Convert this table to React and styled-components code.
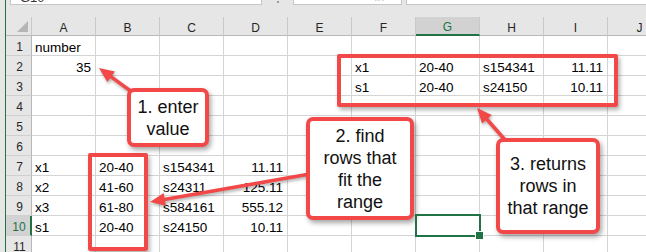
import styled, { createGlobalStyle } from "styled-components";

const GlobalStyle = createGlobalStyle`
  html, body {
    margin: 0;
    padding: 0;
    background: #e6e6e6;
    overflow: hidden;
  }
  * {
    box-sizing: border-box;
  }
`;

const RED = "#f24848";
const GREEN = "#217346";

const COLS = ["A", "B", "C", "D", "E", "F", "G", "H", "I", "J"];
const ROW_COUNT = 11;
const SELECTED = { col: "G", row: 10 };

// cell contents, keyed by address; numbers are right aligned
const cells = {
  A1: "number",
  A2: 35,
  F2: "x1",
  G2: "20-40",
  H2: "s154341",
  I2: "11.11",
  F3: "s1",
  G3: "20-40",
  H3: "s24150",
  I3: "10.11",
  A7: "x1",
  B7: "20-40",
  C7: "s154341",
  D7: "11.11",
  A8: "x2",
  B8: "41-60",
  C8: "s24311",
  D8: "125.11",
  A9: "x3",
  B9: "61-80",
  C9: "s584161",
  D9: "555.12",
  A10: "s1",
  B10: "20-40",
  C10: "s24150",
  D10: "10.11",
};

const numeric = new Set(["A2", "I2", "I3", "D7", "D8", "D9", "D10"]);

const Window = styled.div`
  position: relative;
  width: 646px;
  height: 252px;
  overflow: hidden;
  padding-left: 5px;
  font-family: "Liberation Sans", Arial, sans-serif;
`;

const Workbook = styled.div`
  height: 100%;
  border-left: 1px solid ${GREEN};
  display: flex;
  flex-direction: column;
`;

const FormulaBar = styled.div`
  display: flex;
  height: 7px;
  margin-bottom: 12px;
`;

const NameBox = styled.div`
  width: 252px;
  margin-left: 4px;
  background: #fff;
  border: 1px solid #c6c6c6;
  border-top: none;
  overflow: hidden;
  font-size: 13px;
  color: #333;
  padding-left: 9px;
  line-height: 13px;

  span {
    display: block;
    margin-top: -9px;
  }
`;

const Handle = styled.div`
  width: 31px;
  display: flex;
  justify-content: center;

  &::before {
    content: "";
    width: 2px;
    height: 2px;
    margin-top: 1px;
    background: #9a9a9a;
  }
`;

const FxBox = styled.div`
  width: 109px;
  background: #fff;
  border: 1px solid #c6c6c6;
  border-top: none;
  overflow: hidden;
  display: flex;
  gap: 22px;
  padding-left: 14px;
  font-size: 13px;
  color: #c8c8c8;
  line-height: 13px;

  span {
    margin-top: -10px;
  }
`;

const FormulaInput = styled.div`
  flex: 1;
  margin-left: 4px;
  background: #fff;
  border: 1px solid #c6c6c6;
  border-top: none;
  border-right: none;
`;

const Sheet = styled.div`
  display: grid;
  grid-template-columns: 26px repeat(${COLS.length}, 64px);
  grid-template-rows: 19px repeat(${ROW_COUNT}, 20px);
  background: #fff;
  font-size: 13.5px;
`;

const Corner = styled.div`
  background: #e6e6e6;
  border-right: 1px solid #c8c8c8;
  border-bottom: 1px solid #b8b8b8;
  position: relative;

  &::after {
    content: "";
    position: absolute;
    right: 3px;
    bottom: 3px;
    width: 0;
    height: 0;
    border-left: 11px solid transparent;
    border-bottom: 11px solid #b5b5b5;
  }
`;

const ColHeader = styled.div`
  display: flex;
  align-items: center;
  justify-content: center;
  padding-top: 3px;
  font-size: 12px;
  color: ${(p) => (p.$active ? GREEN : "#262626")};
  background: ${(p) => (p.$active ? "#d2d2d2" : "#e6e6e6")};
  border-right: 1px solid #c8c8c8;
  border-bottom: ${(p) => (p.$active ? `2px solid ${GREEN}` : "1px solid #b8b8b8")};
`;

const RowHeader = styled.div`
  display: flex;
  align-items: center;
  justify-content: center;
  padding: 2px 0 0 2px;
  font-size: 12px;
  color: ${(p) => (p.$active ? GREEN : "#262626")};
  background: ${(p) => (p.$active ? "#d2d2d2" : "#e6e6e6")};
  border-bottom: 1px solid #cfcfcf;
  border-right: ${(p) => (p.$active ? `2px solid ${GREEN}` : "1px solid #b8b8b8")};
`;

const Cell = styled.div`
  position: relative;
  display: flex;
  align-items: flex-end;
  justify-content: ${(p) => (p.$num ? "flex-end" : "flex-start")};
  padding: 0 4px 0 3px;
  color: #000;
  white-space: nowrap;
  border-right: 1px solid #d4d4d4;
  border-bottom: 1px solid #d4d4d4;
`;

const Selection = styled.div`
  position: absolute;
  top: -2px;
  left: -1px;
  right: -2px;
  bottom: -2px;
  border: 2px solid ${GREEN};
  z-index: 1;

  &::after {
    content: "";
    position: absolute;
    right: -5px;
    bottom: -5px;
    width: 7px;
    height: 7px;
    background: ${GREEN};
    border: 1px solid #fff;
  }
`;

const Overlay = styled.div`
  position: absolute;
  inset: 0;
  pointer-events: none;
`;

const Arrows = styled.svg`
  position: absolute;
  inset: 0;
  filter: drop-shadow(1px 2px 1.5px rgba(0, 0, 0, 0.3));
`;

const Frame = styled.div`
  position: absolute;
  left: ${(p) => p.$x}px;
  top: ${(p) => p.$y}px;
  width: ${(p) => p.$w}px;
  height: ${(p) => p.$h}px;
  border: 4px solid ${RED};
  border-radius: 2px;
  box-shadow: 2px 3px 4px rgba(0, 0, 0, 0.3);
`;

const Callout = styled.div`
  position: absolute;
  left: ${(p) => p.$x}px;
  top: ${(p) => p.$y}px;
  width: ${(p) => p.$w}px;
  height: ${(p) => p.$h}px;
  background: #fff;
  border: 4px solid ${RED};
  border-radius: 7px;
  box-shadow: 2px 3px 5px rgba(0, 0, 0, 0.35);
  display: flex;
  flex-direction: column;
  align-items: center;
  justify-content: center;
  font-family: "Liberation Sans", Arial, sans-serif;
  font-size: 18px;
  line-height: 22px;
  color: #111;
  white-space: nowrap;
`;

// straight arrow with a triangular head at (x2, y2)
const Arrow = ({ x1, y1, x2, y2 }) => {
  const dx = x2 - x1;
  const dy = y2 - y1;
  const len = Math.hypot(dx, dy);
  const ux = dx / len;
  const uy = dy / len;
  const head = 15;
  const half = 6.5;
  const bx = x2 - ux * head;
  const by = y2 - uy * head;
  const pts = [
    [x2, y2],
    [bx - uy * half, by + ux * half],
    [bx + uy * half, by - ux * half],
  ]
    .map((p) => p.join(","))
    .join(" ");
  return (
    <g>
      <line x1={x1} y1={y1} x2={bx + ux * 2} y2={by + uy * 2} stroke={RED} strokeWidth="3.5" />
      <polygon points={pts} fill={RED} />
    </g>
  );
};

const App = () => {
  const rows = Array.from({ length: ROW_COUNT }, (_, i) => i + 1);

  return (
    <>
      <GlobalStyle />
      <Window>
        <Workbook>
          <FormulaBar>
            <NameBox>
              <span>G10</span>
            </NameBox>
            <Handle />
            <FxBox>
              <span>✕</span>
              <span>✓</span>
              <span>fx</span>
            </FxBox>
            <FormulaInput />
          </FormulaBar>

          <Sheet>
            <Corner />
            {COLS.map((c) => (
              <ColHeader key={c} $active={c === SELECTED.col}>
                {c}
              </ColHeader>
            ))}
            {rows.map((r) => [
              <RowHeader key={`h${r}`} $active={r === SELECTED.row}>
                {r}
              </RowHeader>,
              ...COLS.map((c) => {
                const addr = `${c}${r}`;
                return (
                  <Cell key={addr} $num={numeric.has(addr)}>
                    {cells[addr]}
                    {c === SELECTED.col && r === SELECTED.row && <Selection />}
                  </Cell>
                );
              }),
            ])}
          </Sheet>
        </Workbook>

        <Overlay>
          <Frame $x={337} $y={54} $w={281} $h={53} />
          <Frame $x={88} $y={153} $w={60} $h={98} />
          <Arrows width="646" height="252" viewBox="0 0 646 252">
            <Arrow x1={132} y1={92} x2={99} y2={68} />
            <Arrow x1={310} y1={174} x2={150} y2={202} />
            <Arrow x1={506} y1={141} x2={477} y2={108} />
          </Arrows>
          <Callout $x={127} $y={88} $w={82} $h={59}>
            <span>1. enter</span>
            <span>value</span>
          </Callout>
          <Callout $x={306} $y={117} $w={108} $h={103}>
            <span>2. find</span>
            <span>rows that</span>
            <span>fit the</span>
            <span>range</span>
          </Callout>
          <Callout $x={496} $y={138} $w={104} $h={96}>
            <span>3. returns</span>
            <span>rows in</span>
            <span>that range</span>
          </Callout>
        </Overlay>
      </Window>
    </>
  );
};

export default App;
